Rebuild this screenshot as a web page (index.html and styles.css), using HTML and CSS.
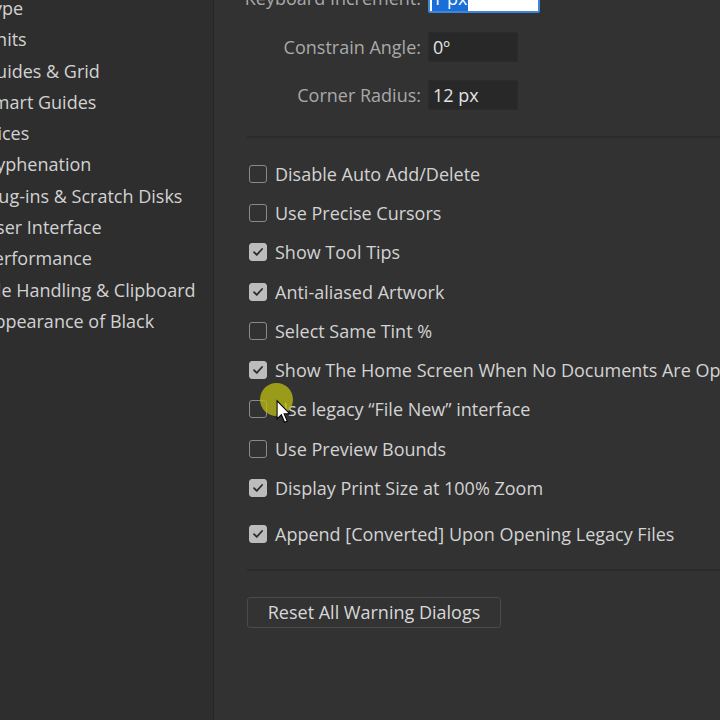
FILE: index.html
```html
<!DOCTYPE html>
<html lang="en">
<head>
<meta charset="utf-8">
<title>Preferences</title>
<link rel="stylesheet" href="styles.css">
</head>
<body>
<div class="app">
  <nav class="sidebar">
    <ul class="nav-list">
      <li>Type</li>
      <li>Units</li>
      <li>Guides &amp; Grid</li>
      <li>Smart Guides</li>
      <li>Slices</li>
      <li>Hyphenation</li>
      <li>Plug-ins &amp; Scratch Disks</li>
      <li>User Interface</li>
      <li>Performance</li>
      <li>File Handling &amp; Clipboard</li>
      <li>Appearance of Black</li>
    </ul>
  </nav>
  <main class="main">
    <div class="fields">
      <label class="field-label">Keyboard Increment:</label>
      <div class="input input-active"><span class="sel">1 px</span></div>
      <label class="field-label">Constrain Angle:</label>
      <div class="input">0º</div>
      <label class="field-label">Corner Radius:</label>
      <div class="input">12 px</div>
    </div>
    <div class="sep sep-top"></div>
    <ul class="checks">
      <li class="check"><span class="box"></span><span class="text">Disable Auto Add/Delete</span></li>
      <li class="check"><span class="box"></span><span class="text">Use Precise Cursors</span></li>
      <li class="check"><span class="box on"><svg viewBox="0 0 18 18"><path d="M4.5 9.2 L7.6 12.3 L13.6 5.6"/></svg></span><span class="text">Show Tool Tips</span></li>
      <li class="check"><span class="box on"><svg viewBox="0 0 18 18"><path d="M4.5 9.2 L7.6 12.3 L13.6 5.6"/></svg></span><span class="text">Anti-aliased Artwork</span></li>
      <li class="check"><span class="box"></span><span class="text">Select Same Tint %</span></li>
      <li class="check"><span class="box on"><svg viewBox="0 0 18 18"><path d="M4.5 9.2 L7.6 12.3 L13.6 5.6"/></svg></span><span class="text">Show The Home Screen When No Documents Are Open</span></li>
      <li class="check"><span class="box"></span><span class="text">Use legacy “File New” interface</span></li>
      <li class="check"><span class="box"></span><span class="text">Use Preview Bounds</span></li>
      <li class="check"><span class="box on"><svg viewBox="0 0 18 18"><path d="M4.5 9.2 L7.6 12.3 L13.6 5.6"/></svg></span><span class="text">Display Print Size at 100% Zoom</span></li>
      <li class="check check-last"><span class="box on"><svg viewBox="0 0 18 18"><path d="M4.5 9.2 L7.6 12.3 L13.6 5.6"/></svg></span><span class="text">Append [Converted] Upon Opening Legacy Files</span></li>
    </ul>
    <div class="sep sep-bottom"></div>
    <button class="btn">Reset All Warning Dialogs</button>
  </main>
  <div class="click-halo"></div>
  <svg class="cursor" viewBox="0 0 14 22" width="14" height="22"><path d="M1 1 L1 18 L5 14 L8 21 L10.5 20 L7.6 13.2 L13 13.2 Z" fill="#fff" stroke="#000" stroke-width="1"/></svg>
</div>
</body>
</html>
```

FILE: styles.css
```css
* { box-sizing: border-box; }
html, body {
  margin: 0;
  padding: 0;
  width: 720px;
  height: 720px;
  overflow: hidden;
  background: #323232;
  font-family: "Open Sans", "Noto Sans", sans-serif;
}
.app {
  position: relative;
  display: flex;
  width: 720px;
  height: 720px;
  overflow: hidden;
}
.sidebar {
  width: 214px;
  flex: none;
  background: #2e2e2e;
  border-right: 1px solid #272727;
  overflow: hidden;
}
.nav-list {
  list-style: none;
  margin: -7px 0 0 -17px;
  padding: 0;
}
.nav-list li {
  height: 31.3px;
  line-height: 31.3px;
  font-size: 18px;
  color: #d2d2d2;
  white-space: nowrap;
}
.main {
  flex: 1;
  padding-left: 33px;
  overflow: hidden;
  min-width: 0;
}
.fields {
  display: grid;
  grid-template-columns: 214px auto;
  column-gap: 7px;
  row-gap: 18.5px;
  margin: -17px 0 0 -40px;
  justify-items: start;
  align-items: center;
}
.field-label {
  justify-self: end;
  font-size: 18px;
  color: #a9a9a9;
  white-space: nowrap;
}
.input {
  width: 90px;
  height: 30px;
  line-height: 28px;
  padding-left: 4px;
  background: #282828;
  border: 1px solid #2b2b2b;
  border-radius: 2px;
  color: #e2e2e2;
  font-size: 18px;
  white-space: nowrap;
}
.input-active {
  width: 112px;
  background: #fff;
  border: 2px solid #3d86d9;
  line-height: 26px;
  padding-left: 2px;
}
.sel {
  background: #1a6ed8;
  color: #fff;
  padding: 1px 1px 1px 0;
}
.sep {
  height: 2px;
  background: #2a2a2a;
}
.sep-top { margin-top: 26px; }
.checks {
  list-style: none;
  margin: 16px 0 0 0;
  padding: 0;
}
.check {
  display: flex;
  align-items: center;
  height: 39.3px;
  padding-left: 2px;
  white-space: nowrap;
}
.check-last { margin-top: 7px; }
.box {
  width: 18px;
  height: 18px;
  flex: none;
  border: 1.5px solid #8a8a8a;
  border-radius: 3px;
  display: flex;
  align-items: center;
  justify-content: center;
}
.box.on {
  background: #bcbcbc;
  border-color: #bcbcbc;
}
.box svg {
  width: 18px;
  height: 18px;
  fill: none;
  stroke: #2c2c2c;
  stroke-width: 2;
  stroke-linecap: round;
  stroke-linejoin: round;
}
.text {
  margin-left: 8px;
  font-size: 18px;
  color: #d3d3d3;
}
.sep-bottom { margin-top: 15px; }
.btn {
  display: block;
  margin-top: 26px;
  width: 254px;
  height: 31px;
  background: #333;
  border: 1px solid #4b4b4b;
  border-radius: 3px;
  color: #d8d8d8;
  font-family: inherit;
  font-size: 18px;
  padding: 0;
}
.click-halo {
  position: absolute;
  left: 260px;
  top: 383px;
  width: 33px;
  height: 33px;
  border-radius: 50%;
  background: rgba(185, 185, 20, 0.78);
}
.cursor {
  position: absolute;
  left: 276px;
  top: 398px;
  width: 15px;
  height: 27px;
}
```
